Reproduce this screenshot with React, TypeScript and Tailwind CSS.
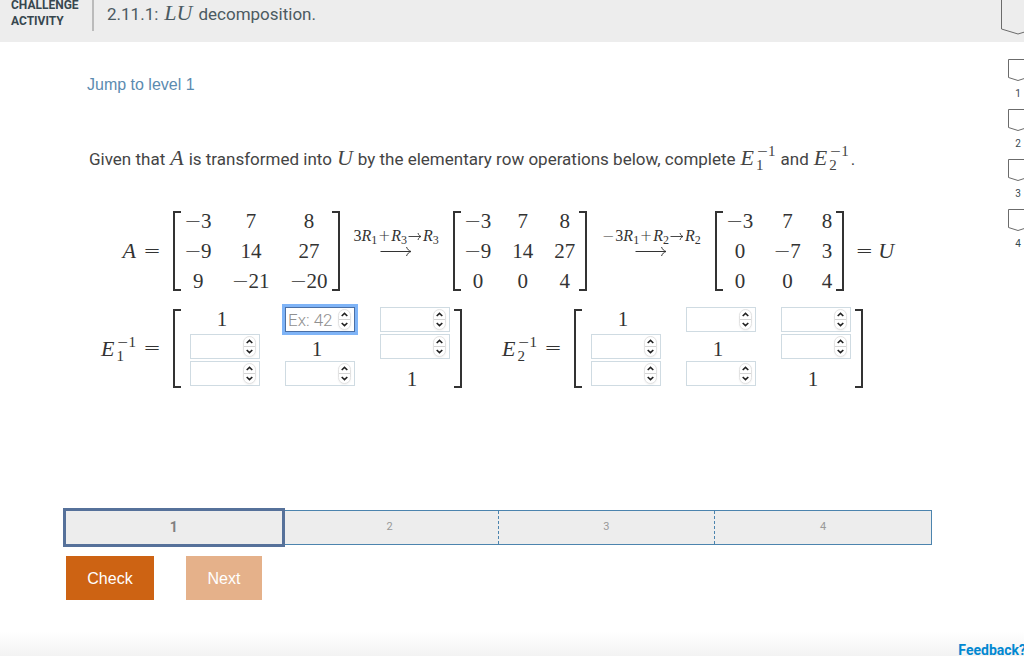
import { Fragment, useState, type ReactNode } from "react";

const serif = "font-['Liberation_Serif',serif]";
const helvetica = "font-['Liberation_Sans',sans-serif]";

function Sign({ children }: { children: ReactNode }) {
  return (
    <span className="inline-flex w-4 justify-center font-['DejaVu_Sans',sans-serif] text-[21px] leading-none font-extralight">
      {children}
    </span>
  );
}

function SmallSign({ children }: { children: ReactNode }) {
  return (
    <span className="inline-flex w-[14px] justify-center font-['DejaVu_Sans',sans-serif] text-[15px] leading-none font-extralight">
      {children}
    </span>
  );
}

function Var({ children }: { children: ReactNode }) {
  return <i className={`${serif} text-[22px] leading-none font-normal`}>{children}</i>;
}

function EInverse({ index }: { index: number }) {
  return (
    <span className={`${serif} inline-flex items-center leading-none font-normal`}>
      <i className="text-[22px] leading-none">E</i>
      <span className="flex flex-col pl-0.5 text-[15px] leading-[14px]">
        <span className="flex pl-px">
          <span className="flex w-[11px] justify-center font-['DejaVu_Sans',sans-serif] text-[14px] font-extralight">
            −
          </span>
          1
        </span>
        <span>{index}</span>
      </span>
    </span>
  );
}

function Bracketed({ children, pad }: { children: ReactNode; pad: string }) {
  return (
    <div className="flex">
      <span className="w-2 border-y-2 border-l-2 border-[#333]" />
      <div className={pad}>{children}</div>
      <span className="w-2 border-y-2 border-r-2 border-[#333]" />
    </div>
  );
}

function Matrix({ rows }: { rows: number[][] }) {
  return (
    <Bracketed pad="px-1 -my-[5px]">
      <div className="grid grid-cols-[auto_auto_auto] gap-x-[21px] text-center text-[21px] leading-[30px]">
        {rows.flat().map((n, i) => (
          <span key={i} className="whitespace-nowrap">
            {n < 0 && <Sign>−</Sign>}
            {Math.abs(n)}
          </span>
        ))}
      </div>
    </Bracketed>
  );
}

function R({ n }: { n: number }) {
  return (
    <>
      <i>R</i>
      <span className="relative top-[3px] text-[12px]">{n}</span>
    </>
  );
}

function Operation({ children }: { children: ReactNode }) {
  return (
    <div className="flex flex-col items-center px-3.5 pb-5">
      <span className="text-[16px] leading-[18px] whitespace-nowrap">{children}</span>
      <svg width="32" height="10" viewBox="0 0 32 10" fill="none" stroke="#333" strokeWidth="1">
        <path d="M0.5 5.5H31M26.5 1C27.5 3.5 29 4.8 31 5.5C29 6.2 27.5 7.5 26.5 10" />
      </svg>
    </div>
  );
}

function SmallArrow() {
  return (
    <svg
      className="mx-px inline-block"
      width="14"
      height="9"
      viewBox="0 0 14 9"
      fill="none"
      stroke="#333"
      strokeWidth="0.9"
    >
      <path d="M0.5 4.5H13M10 1C10.5 3 11.5 4 13 4.5C11.5 5 10.5 6 10 8" />
    </svg>
  );
}

function Stepper({ label, focused = false }: { label: string; focused?: boolean }) {
  const [value, setValue] = useState("");
  const step = (d: number) => setValue(String((Number(value) || 0) + d));
  return (
    <div
      className={
        focused
          ? "flex h-[25px] w-[70px] items-center border border-[#4a6fa5] bg-white pr-[3px] ring-[3px] ring-[#7fb4f7]"
          : "flex h-[25px] w-[70px] items-center border border-[#cfdbe2] bg-white pr-[3px]"
      }
    >
      <input
        type="number"
        aria-label={label}
        placeholder={focused ? "Ex: 42" : undefined}
        value={value}
        onChange={(e) => setValue(e.target.value)}
        className="h-full w-full min-w-0 flex-1 appearance-none bg-transparent pl-0.5 font-[Roboto,sans-serif] text-[17px] font-light text-[#333] outline-none [-moz-appearance:textfield] placeholder:text-[#909090] [&::-webkit-inner-spin-button]:appearance-none"
      />
      <div className="flex h-[21px] w-[13px] flex-none flex-col rounded-full border border-[#e2e2e2] bg-white shadow-xs">
        <button
          type="button"
          aria-label={`Increase ${label}`}
          onClick={() => step(1)}
          className="flex flex-1 items-center justify-center border-b border-[#d4d4d4]"
        >
          <svg width="7" height="5" viewBox="0 0 7 5" fill="none" stroke="#222" strokeWidth="1.6">
            <path d="M0.7 4L3.5 1.3L6.3 4" />
          </svg>
        </button>
        <button
          type="button"
          aria-label={`Decrease ${label}`}
          onClick={() => step(-1)}
          className="flex flex-1 items-center justify-center"
        >
          <svg width="7" height="5" viewBox="0 0 7 5" fill="none" stroke="#222" strokeWidth="1.6">
            <path d="M0.7 1L3.5 3.7L6.3 1" />
          </svg>
        </button>
      </div>
    </div>
  );
}

const diagonalLeading = ["leading-6", "leading-[30px]", "leading-9"];

function InputMatrix({ name, focusFirst = false }: { name: string; focusFirst?: boolean }) {
  const idx = [0, 1, 2];
  return (
    <Bracketed pad="-mt-0.5 pb-0.5 pl-[9px] pr-1">
      <div className="grid grid-cols-[70px_70px_70px] grid-rows-[25px_25px_25px] gap-x-[25px] gap-y-0.5">
        {idx.map((r) => (
          <Fragment key={r}>
            {idx.map((c) =>
              r === c ? (
                <span key={c} className={`${diagonalLeading[r]} pr-1.5 text-center text-[21px]`}>
                  1
                </span>
              ) : (
                <Stepper
                  key={c}
                  label={`${name} row ${r + 1} column ${c + 1}`}
                  focused={focusFirst && r === 0 && c === 1}
                />
              ),
            )}
          </Fragment>
        ))}
      </div>
    </Bracketed>
  );
}

function Ribbon({ large = false }: { large?: boolean }) {
  return large ? (
    <svg width="36" height="35" viewBox="0 0 36 35" fill="none" stroke="#6b6b6b">
      <path d="M1.5 -1V29L18 34L34.5 29V-1" />
    </svg>
  ) : (
    <svg width="20" height="22" viewBox="0 0 20 22" fill="#fff" stroke="#6b6b6b">
      <path d="M0.5 0.5H19.5V18.5L10 21.5L0.5 18.5Z" />
    </svg>
  );
}

export default function App() {
  return (
    <div className="flex min-h-screen flex-col overflow-hidden bg-white font-[Roboto,sans-serif] text-[#333]">
      <header className="flex h-[42px] items-start bg-[#ededed] pl-[11px] text-[#37474f]">
        <div className="-mt-[3px] w-[81px] text-[12px] leading-4 font-bold">
          CHALLENGE
          <br />
          ACTIVITY
        </div>
        <div className="h-[31px] w-0.5 bg-[#bbb]" />
        <h1 className="flex items-baseline gap-1.5 pl-[13px] text-[17px] leading-7 font-normal text-[#4b5a61]">
          2.11.1: <Var>LU</Var> decomposition.
        </h1>
        <div className="-mr-3 ml-auto">
          <Ribbon large />
        </div>
      </header>

      <div className="flex flex-1 items-start">
        <main className="min-w-0 flex-1 pl-[65px]">
          <a
            href="#level-1"
            className={`${helvetica} ml-[22px] mt-[33px] block w-fit text-[16px] leading-5 text-[#5b8bb0]`}
          >
            Jump to level 1
          </a>

          <p className="ml-6 mt-[49px] flex h-7 items-baseline gap-[5px] text-[17px] leading-none font-normal whitespace-nowrap text-[#444]">
            Given that <Var>A</Var> is transformed into <Var>U</Var> by the elementary row operations
            below, complete <EInverse index={1} /> and{" "}
            <span className="flex items-baseline gap-0.5">
              <EInverse index={2} />.
            </span>
          </p>

          <div className={`${serif} ml-9 mt-[39px] flex items-center`}>
            <div className="flex w-[72px] items-center justify-end gap-2 pr-[13px]">
              <Var>A</Var>
              <Sign>=</Sign>
            </div>
            <Matrix rows={[[-3, 7, 8], [-9, 14, 27], [9, -21, -20]]} />
            <Operation>
              3<R n={1} />
              <SmallSign>+</SmallSign>
              <R n={3} />
              <SmallArrow />
              <R n={3} />
            </Operation>
            <Matrix rows={[[-3, 7, 8], [-9, 14, 27], [0, 0, 4]]} />
            <Operation>
              <SmallSign>−</SmallSign>3<R n={1} />
              <SmallSign>+</SmallSign>
              <R n={2} />
              <SmallArrow />
              <R n={2} />
            </Operation>
            <Matrix rows={[[-3, 7, 8], [0, -7, 3], [0, 0, 4]]} />
            <div className="flex items-center gap-1.5 pl-3">
              <Sign>=</Sign>
              <Var>U</Var>
            </div>
          </div>

          <div className={`${serif} ml-9 mt-[18px] flex items-center gap-10`}>
            {[1, 2].map((n) => (
              <div key={n} className="flex items-center">
                <div className="flex w-[72px] items-center justify-between pr-[13px]">
                  <EInverse index={n} />
                  <Sign>=</Sign>
                </div>
                <InputMatrix name={`E${n} inverse`} focusFirst={n === 1} />
              </div>
            ))}
          </div>

          <ol className="mr-14 mt-[122px] flex h-[35px] border border-[#4c84ae] bg-[#ededed] text-[11px] text-[#999]">
            <li className="flex flex-1 items-center justify-center text-[14px] font-bold text-[#808080] outline-[3px] outline-[#56719a]">
              1
            </li>
            <li className="flex flex-1 items-center justify-center">2</li>
            <li className="flex flex-1 items-center justify-center border-l border-dashed border-[#4c84ae]">
              3
            </li>
            <li className="flex flex-1 items-center justify-center border-l border-dashed border-[#4c84ae]">
              4
            </li>
          </ol>

          <div className={`${helvetica} mt-[11px] flex gap-8 pl-px text-[16px] text-white`}>
            <button type="button" className="h-11 w-[88px] bg-[#cd6313] pt-0.5">
              Check
            </button>
            <button type="button" className="h-11 w-[76px] bg-[#e5b18a] pt-0.5">
              Next
            </button>
          </div>
        </main>

        <aside className="-mr-3 flex w-12 flex-none flex-col pl-3 pt-[17px] text-center text-[10px] text-[#37474f]">
          {[1, 2, 3, 4].map((n) => (
            <div key={n} className="flex h-[50px] flex-col items-center gap-[7px]">
              <Ribbon />
              <span className="leading-3">{n}</span>
            </div>
          ))}
        </aside>
      </div>

      <footer className="-mt-6 flex h-6 justify-end bg-linear-to-b from-white to-[#f3f3f3]">
        <a href="#feedback" className="-mr-0.5 pt-2.5 text-[14px] leading-4 font-bold text-[#0288d1]">
          Feedback?
        </a>
      </footer>
    </div>
  );
}
